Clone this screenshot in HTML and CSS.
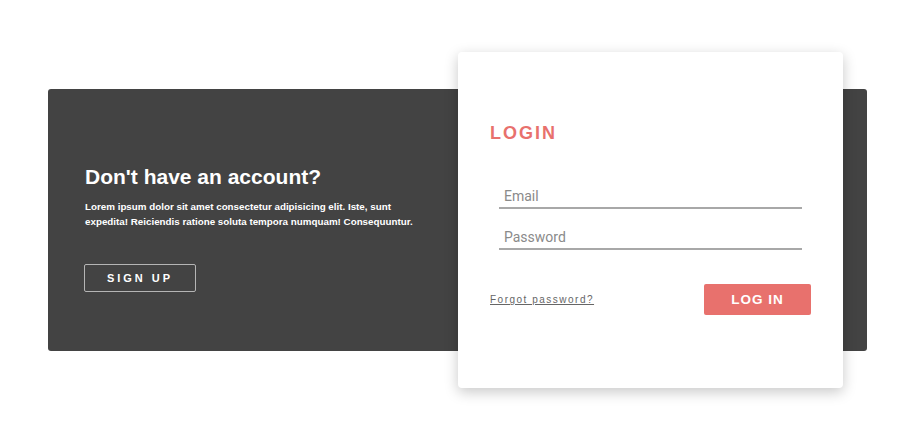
FILE: index.html
```html
<!DOCTYPE html>
<html lang="en">
<head>
    <meta charset="UTF-8">
    <title>Login</title>
    <link rel="stylesheet" href="styles.css">
</head>
<body>
    <div class="page">
        <div class="panel">
            <div class="signup">
                <h2>Don't have an account?</h2>
                <p>Lorem ipsum dolor sit amet consectetur adipisicing elit. Iste, sunt expedita! Reiciendis ratione soluta tempora numquam! Consequuntur.</p>
                <button class="btn-outline">SIGN UP</button>
            </div>

            <div class="card">
                <h3>LOGIN</h3>
                <input type="email" placeholder="Email">
                <input type="password" placeholder="Password">
                <div class="actions">
                    <a href="#">Forgot password?</a>
                    <button class="btn-login">LOG IN</button>
                </div>
            </div>
        </div>
    </div>
</body>
</html>
```

FILE: styles.css
```css
html, body {
    margin: 0;
    height: 100%;
}
body {
    font-family: "Liberation Sans", Arial, sans-serif;
    background: #fff;
}
.page {
    padding: 89px 0 86px 48px;
}
.panel {
    position: relative;
    width: 819px;
    height: 262px;
    background: #434343;
    border-radius: 3px;
}
.signup {
    padding: 76px 0 0 37px;
    width: 345px;
    color: #fff;
}
.signup h2 {
    margin: 0 0 10px;
    font-size: 21px;
    line-height: 24px;
}
.signup p {
    margin: 0;
    font-size: 9.8px;
    font-weight: bold;
    line-height: 15px;
}
.btn-outline {
    margin: 35px 0 0 -1px;
    width: 112px;
    height: 28px;
    background: transparent;
    border: 1px solid #b5b5b5;
    border-radius: 2px;
    color: #fff;
    font-family: "Liberation Sans", Arial, sans-serif;
    font-size: 11px;
    font-weight: bold;
    letter-spacing: 3px;
    cursor: pointer;
}
.card {
    position: absolute;
    z-index: 1;
    left: 410px;
    top: -37px;
    width: 385px;
    height: 336px;
    box-sizing: border-box;
    padding: 70px 32px 0;
    background: #fff;
    border-radius: 4px;
    box-shadow: 0 4px 14px rgba(0, 0, 0, 0.22);
}
.card h3 {
    margin: 0 0 40px;
    color: #e8716d;
    font-size: 18px;
    line-height: 22px;
    letter-spacing: 2px;
}
.card input {
    display: block;
    margin: 0 0 16px 9px;
    width: 303px;
    height: 25px;
    box-sizing: border-box;
    padding: 0 5px;
    border: none;
    border-bottom: 2px solid #a8a8a8;
    font-family: Roboto, "Liberation Sans", sans-serif;
    font-size: 14px;
    outline: none;
}
.card input::placeholder { color: #8a8a8a; }
.actions {
    margin-top: 34px;
    display: flex;
    justify-content: space-between;
    align-items: center;
}
.actions a {
    color: #666;
    font-size: 10px;
    letter-spacing: 1.5px;
}
.btn-login {
    width: 107px;
    height: 31px;
    background: #e8716d;
    border: none;
    border-radius: 2px;
    color: #fff;
    font-family: "Liberation Sans", Arial, sans-serif;
    font-size: 13.5px;
    font-weight: bold;
    letter-spacing: 1px;
    cursor: pointer;
}
```
